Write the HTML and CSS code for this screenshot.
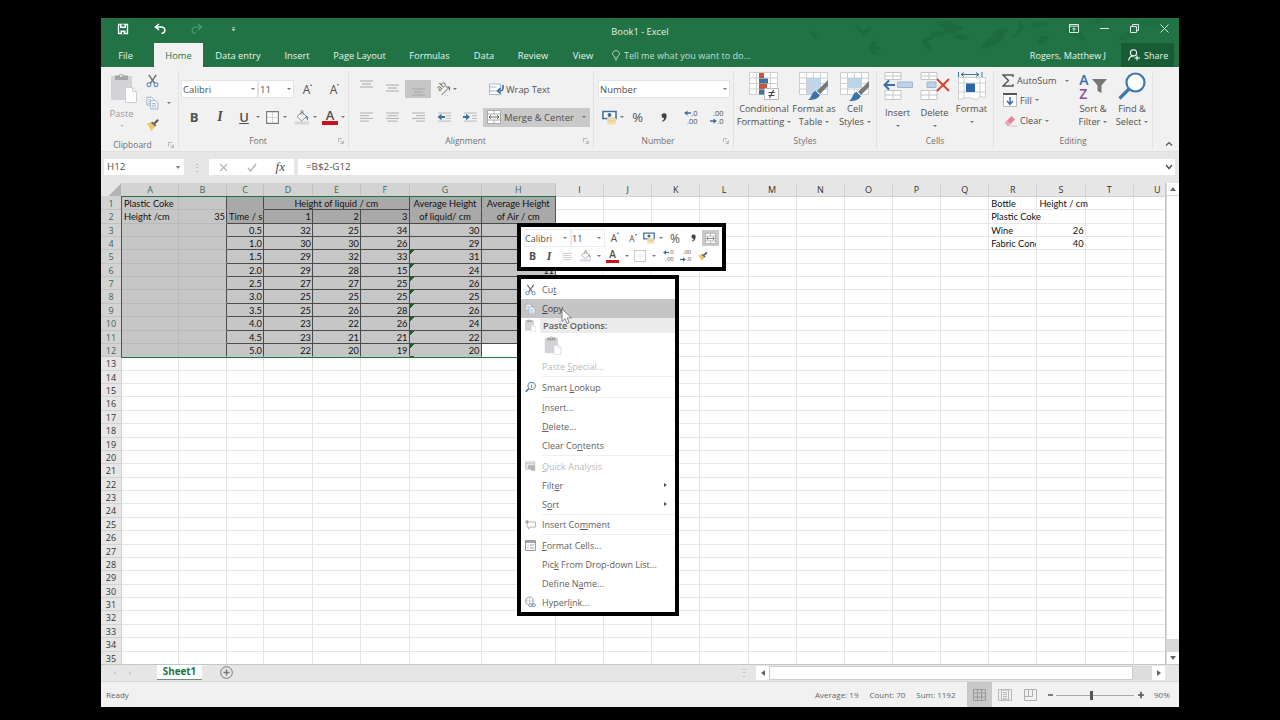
FILE: index.html
```html
<!DOCTYPE html>
<html lang="en">
<head>
    <meta charset="UTF-8">
    <title>Book1 - Excel</title>
    <link rel="stylesheet" href="styles.css">
</head>
<body>
    <!-- shared icons -->
    <svg class="sprite">
        <symbol id="i-cut" viewBox="0 0 14 14"><path d="M3 .5 9.3 9.5M11 .5 4.7 9.5" stroke="#666" stroke-width="1.4" fill="none"/><circle cx="3.2" cy="11" r="2.1" fill="none" stroke="#4f82b3" stroke-width="1.1"/><circle cx="10.8" cy="11" r="2.1" fill="none" stroke="#4f82b3" stroke-width="1.1"/></symbol>
        <symbol id="i-copy" viewBox="0 0 14 14"><path d="M1 .8h5l2.5 2.5v6H1z" fill="#fff" stroke="#9aabbb"/><path d="M5 4.5h5L12.8 7v6.3H5z" fill="#fff" stroke="#9aabbb"/><path d="M2.5 3.5h3M2.5 5.5h2M2.5 7.5h2M6.5 7.5h4M6.5 9.3h4.5M6.5 11.1h4.5" stroke="#7fa6cb" stroke-width=".8"/></symbol>
        <symbol id="i-brush" viewBox="0 0 14 14"><path d="M.5 6l5-1.5 4.5 4-2 2-2.500 3.500z" fill="#edc766"/><path d="M5.500 4.500l4.500 4" stroke="#666" stroke-width="2"/><path d="M8.500 5.800 12.500 2" stroke="#555" stroke-width="2.200"/></symbol>
        <symbol id="i-paste" viewBox="0 0 26 30"><path d="M0 3h21v24H0z" fill="#d3d2d6"/><path d="M4 2.500h3.500a3 3 0 0 1 5.500 0H17V7H4z" fill="#a5a5a5"/><circle cx="10.300" cy="2.800" r="1.200" fill="#eee"/><path d="M14.500 14.500h7l4 4V29.500h-11z" fill="#fff" stroke="#cfcfcf"/><path d="M21.500 14.500v4h4" fill="none" stroke="#cfcfcf"/></symbol>
        <symbol id="i-lines" viewBox="0 0 13 10"><path d="M0 1h13M1.500 3.700h10M0 6.400h13M1.500 9.100h10" stroke="#b0b0b0"/></symbol>
        <symbol id="i-left" viewBox="0 0 13 10"><path d="M0 1h13M0 3.700h9M0 6.400h13M0 9.100h9" stroke="#b0b0b0"/></symbol>
        <symbol id="i-right" viewBox="0 0 13 10"><path d="M0 1h13M4 3.700h9M0 6.400h13M4 9.100h9" stroke="#b0b0b0"/></symbol>
        <symbol id="i-three" viewBox="0 0 13 10"><path d="M0 1h13M2 4h9M0 7h13" stroke="#a8a8a8"/></symbol>
        <symbol id="i-border" viewBox="0 0 14 14"><path d="M.7.7h12.600v12.600H.7z" fill="#fff" stroke="#777" stroke-width="1.200"/><path d="M7 1v12M1 7h12" stroke="#aaa" stroke-dasharray="1 1"/></symbol>
        <symbol id="i-fill" viewBox="0 0 15 15"><path d="M0 11.500h14v3H0z" fill="#d4d7dc"/><path d="M2 6.500 7 2l4.500 4.500-5 4.300z" fill="#fff" stroke="#888"/><path d="M6 5V1.500a1 1 0 0 1 2 0V5" fill="none" stroke="#888"/><path d="M11 5.500c2 1 2.500 2.500 1.800 5-1-1.300-1.800-2.500-1.800-5z" fill="#4a78a8"/></symbol>
        <symbol id="i-money" viewBox="0 0 15 15"><path d="M1 1.500h13v7H1z" fill="#fff" stroke="#41719c" stroke-width="1.600"/><circle cx="7.500" cy="5" r="2" fill="#41719c"/><ellipse cx="9.500" cy="9" rx="4.500" ry="1.500" fill="#f4dfa6"/><ellipse cx="9.500" cy="11" rx="4.500" ry="1.500" fill="#edd28c"/><ellipse cx="9.500" cy="13" rx="4.500" ry="1.500" fill="#f1dda8"/></symbol>
        <symbol id="i-merge" viewBox="0 0 14 14"><path d="M.5.5h13v13H.5zM.5 4h13M.5 10h13M7 .5V4M7 10v3.500" fill="#fff" stroke="#aaa"/><path d="M2 7h10M4 5.200 2 7l2 1.800M10 5.200 12 7l-2 1.800" fill="none" stroke="#666"/></symbol>
        <symbol id="i-larrow" viewBox="0 0 8 6"><path d="M1 3h7" stroke="#3a6ea5" stroke-width="1.700"/><path d="M4 0 .3 3 4 6z" fill="#3a6ea5"/></symbol>
        <symbol id="i-rarrow" viewBox="0 0 8 6"><path d="M0 3h7" stroke="#3a6ea5" stroke-width="1.700"/><path d="M4 0l3.700 3L4 6z" fill="#3a6ea5"/></symbol>
        <symbol id="i-launch" viewBox="0 0 7 7"><path d="M.5 5V.5H5M3 3l3 3M6.300 3v3.300H3" fill="none" stroke="#999" stroke-width=".8"/></symbol>
        <symbol id="i-table" viewBox="0 0 30 28"><path d="M.5.5h28v22H.5zM.5 6h28M.5 11.500h28M.5 17h28M7.500.5v22M14.500.5v22M21.500.5v22" fill="#fff" stroke="#cecece"/></symbol>
        <symbol id="i-paint" viewBox="0 0 22 22"><path d="M21 1v6l-8 8-3-3z" fill="#777"/><path d="M9 12l4 4c-2 4-6 5-12 5 4-2 3-8 8-9z" fill="#3c72aa"/><path d="M9.500 12.500l3 3" stroke="#fff"/></symbol>
    </svg>

    <div class="window">
        <header class="titlebar">
            <svg class="leaves" viewBox="0 0 370 49" fill="#1b6439">
                <path d="M2 13c5 0 3 4 9 7-5 2-9-1-9-7zM45 6c6 1 7 4 9 8 2-3 4-4 9-3-4 2-5 4-6 6l-4 1c-1-5-5-6-8-12zM59 30c2-5 5-8 9-9-1 4-1 6-3 8 4-1 6 0 8 2-4 1-6 1-8 1l4 5c-5 0-9-3-10-7zM112 22c7-2 9-4 13-4-2 4-5 5-7 6 3 1 4 3 4 9-5-2-8-6-10-11z"/>
                <path d="M126 5c7-4 15-3 20 1-5 5-14 5-20-1zM134 13c5-7 13-8 21-4-5 6-14 9-21 4zM120 16c6-4 12-4 17 0-5 4-12 4-17 0zM144 19c5-4 12-3 17 0-5 4-12 4-17 0z"/>
                <path d="M172 31c4-10 11-14 24-15-3 8-9 13-24 15zM182 16c6-5 11-6 17-5-3 5-9 8-17 5zM201 21c8-8 11-12 8-18 9 4 9 11-8 18zM228 27c1-8 5-10 12-9-2 5-4 8-12 9z"/>
                <path d="M220 7c8-5 14-5 20-1-6 4-12 5-20 1zM256 10c12 0 18 4 22 13-10-1-17-4-22-13z" opacity=".8"/>
                <path d="M276 6c6-6 12-7 20-6-3 6-9 8-20 6zM308 22c5-8 13-10 22-9-5 7-12 11-22 9zM330 6c7-5 14-6 24-3-6 6-15 7-24 3z" opacity=".6"/>
            </svg>
            <div class="title-row">
                <div class="quick">
                    <svg width="12" height="12" viewBox="0 0 12 12"><path d="M1.500 1.500h9v9h-9z" fill="none" stroke="#fff" stroke-width="1.300"/><path d="M3 1h6v4H3zM3.500 7.500h5V11h-5z" fill="#fff"/><path d="M4.500 1.500h3v2h-3zM5 9h1.500v2H5z" fill="#217346"/></svg>
                    <svg width="12" height="12" viewBox="0 0 12 12"><path d="M5 1 1.500 4 5 7M2 4h5c5 0 5 6 .5 6.500" fill="none" stroke="#fff" stroke-width="1.600"/></svg>
                    <svg class="redo" width="12" height="12" viewBox="0 0 12 12"><path d="M7 1l3.500 3L7 7M10 4H5C0 4 0 10 4.500 10.500" fill="none" stroke="#4f9a70" stroke-width="1.200"/></svg>
                    <svg width="5" height="5" viewBox="0 0 6 6"><path d="M1 .8h4" stroke="#b9d5c5"/><path d="M.8 2.500h4.400L3 5z" fill="#cfe3d7"/></svg>
                </div>
                <div class="book">Book1 - Excel</div>
                <div class="winctl">
                    <svg width="10" height="9" viewBox="0 0 10 9"><path d="M.5.5h9v8h-9zM.5 2.200h9" fill="none" stroke="#dcebe2"/><path d="M5 7.500V4M3.300 5.500 5 3.800l1.700 1.700" fill="none" stroke="#dcebe2"/></svg>
                    <svg width="9" height="9" viewBox="0 0 9 9"><path d="M0 4.500h9" stroke="#dcebe2"/></svg>
                    <svg width="9" height="9" viewBox="0 0 9 9"><path d="M.5 2.500h6v6h-6zM2.500 2.500v-2h6v6h-2" fill="none" stroke="#dcebe2"/></svg>
                    <svg width="9" height="9" viewBox="0 0 9 9"><path d="M.5.5l8 8M8.500.5l-8 8" stroke="#dcebe2"/></svg>
                </div>
            </div>
            <nav class="tabs">
                <span class="tab file">File</span>
                <span class="tab active">Home</span>
                <span class="tab t-entry">Data entry</span>
                <span class="tab t-insert">Insert</span>
                <span class="tab t-layout">Page Layout</span>
                <span class="tab t-formulas">Formulas</span>
                <span class="tab t-data">Data</span>
                <span class="tab t-review">Review</span>
                <span class="tab t-view">View</span>
                <span class="tell"><svg width="8" height="11" viewBox="0 0 8 11"><path d="M2.700 8V7C-1.500 3.500 1.500.6 4 .6S9.500 3.500 5.300 7v1zM2.700 9.800h2.600" fill="none" stroke="#c5ddcf" stroke-width=".9"/></svg>Tell me what you want to do...</span>
                <span class="user">Rogers, Matthew J</span>
                <span class="share"><svg width="12" height="12" viewBox="0 0 12 12"><circle cx="5.500" cy="3.800" r="3.100" fill="none" stroke="#fff" stroke-width="1.100"/><path d="M.7 11.500C1 8.500 3 7 5.500 7M9 6.500v5M6.500 9H12" fill="none" stroke="#fff" stroke-width="1.100"/></svg>Share</span>
            </nav>
        </header>

        <section class="ribbon">
            <div class="group g-clipboard">
                <div class="body">
                    <div class="paste"><svg width="26" height="30"><use href="#i-paste"/></svg><span>Paste</span><i class="caret pale"></i></div>
                    <div class="clip-tools">
                        <svg width="13" height="14"><use href="#i-cut"/></svg>
                        <div><svg width="13" height="14"><use href="#i-copy"/></svg><i class="caret"></i></div>
                        <svg width="14" height="13"><use href="#i-brush"/></svg>
                    </div>
                </div>
                <div class="label">Clipboard<svg class="launch"><use href="#i-launch"/></svg></div>
            </div>

            <div class="group g-font">
                <div class="body rows">
                    <div class="row">
                        <span class="box fam">Calibri<i class="caret"></i></span><span class="box size">11<i class="caret"></i></span>
                        <span class="grow">A<i class="tick"></i></span><span class="grow">A<i class="tick down"></i></span>
                    </div>
                    <div class="row">
                        <b class="fmt">B</b><em class="fmt">I</em><u class="fmt und">U</u><i class="caret"></i>
                        <svg class="ic-border" width="13" height="13"><use href="#i-border"/></svg><i class="caret"></i>
                        <svg class="ic-fill" width="15" height="15"><use href="#i-fill"/></svg><i class="caret"></i>
                        <span class="fcolor">A</span><i class="caret"></i>
                    </div>
                </div>
                <div class="label">Font<svg class="launch"><use href="#i-launch"/></svg></div>
            </div>

            <div class="group g-align">
                <div class="body rows">
                    <div class="row">
                        <span class="al up"><svg width="13" height="10"><use href="#i-three"/></svg></span>
                        <span class="al"><svg width="13" height="10"><use href="#i-three"/></svg></span>
                        <span class="al on"><svg width="13" height="10"><use href="#i-three"/></svg></span>
                        <span class="al rot"><span class="slant"><span>ab</span><svg width="14" height="13" viewBox="0 0 14 13"><path d="M4.500 12 12.500 4M9 4h3.500v3.500" fill="none" stroke="#666"/></svg></span><i class="caret"></i></span>
                        <span class="wrap"><svg width="15" height="13" viewBox="0 0 15 13"><path d="M.5 1h11v10.500H.5zM.5 4h7M.5 8h7" fill="#fff" stroke="#a9b8c6"/><path d="M14 2v3c0 3-2 3-5 3M11.500 5 8.500 8l3 2.500" fill="none" stroke="#3a6ea5" stroke-width="1.600"/></svg>Wrap Text</span>
                    </div>
                    <div class="row">
                        <span class="al"><svg width="13" height="10"><use href="#i-left"/></svg></span>
                        <span class="al"><svg width="13" height="10"><use href="#i-lines"/></svg></span>
                        <span class="al"><svg width="13" height="10"><use href="#i-right"/></svg></span>
                        <span class="al"><svg width="14" height="10" viewBox="0 0 14 10"><path d="M1 1h13M9 3.700h5M9 6.400h5M1 9.100h13" stroke="#bbb"/><path d="M3 5h5" stroke="#3a6ea5" stroke-width="2"/><path d="M4.500 1.800.5 5l4 3.200z" fill="#3a6ea5"/></svg></span>
                        <span class="al"><svg width="14" height="10" viewBox="0 0 14 10"><path d="M1 1h13M9 3.700h5M9 6.400h5M1 9.100h13" stroke="#bbb"/><path d="M0 5h4" stroke="#3a6ea5" stroke-width="2"/><path d="M3 1.800 7 5 3 8.200z" fill="#3a6ea5"/></svg></span>
                        <span class="merge"><svg width="14" height="14"><use href="#i-merge"/></svg>Merge &amp; Center<i class="caret"></i></span>
                    </div>
                </div>
                <div class="label">Alignment<svg class="launch"><use href="#i-launch"/></svg></div>
            </div>

            <div class="group g-number">
                <div class="body rows">
                    <div class="row"><span class="box num">Number<i class="caret"></i></span></div>
                    <div class="row">
                        <svg class="money" width="15" height="15"><use href="#i-money"/></svg><i class="caret"></i>
                        <span class="pct">%</span>
                        <span class="comma"><svg width="6" height="9" viewBox="0 0 6 9"><path d="M3 .3a2.400 2.400 0 0 1 2.600 2.600C5.600 6 4 8 1.500 8.800L1 8c1.300-.7 2-1.600 2.100-2.700A2.500 2.500 0 1 1 3 .3z" fill="#444"/></svg></span>
                        <span class="dec"><span><svg width="7" height="6"><use href="#i-larrow"/></svg>.0</span><span>.00</span></span>
                        <span class="dec"><span>.00</span><span><svg width="7" height="6"><use href="#i-rarrow"/></svg>.0</span></span>
                    </div>
                </div>
                <div class="label">Number<svg class="launch"><use href="#i-launch"/></svg></div>
            </div>

            <div class="group g-styles">
                <div class="body">
                    <div class="big cond"><svg width="30" height="29" viewBox="0 0 30 29"><use href="#i-table" width="30" height="28"/><path d="M10 1h5v5h-5zM10 12h8v5h-8z" fill="#c8553d"/><path d="M10 6.500h9v5h-9zM10 17.500h5v5h-5z" fill="#41719c"/><path d="M15.500 16.500h14v11h-14z" fill="#fff" stroke="#bbb"/><path d="M19.500 20.500h6M19.500 23.500h6M24.500 18l-4 8" stroke="#444" stroke-width="1.100"/></svg>Conditional<span>Formatting<i class="caret"></i></span></div>
                    <div class="big tbl"><svg width="30" height="29" viewBox="0 0 30 29"><use href="#i-table" width="30" height="28"/><path d="M8 6h14v17H8z" fill="#bcd3e8" opacity=".9"/><use href="#i-paint" x="8" y="7" width="22" height="22"/></svg>Format as<span>Table<i class="caret"></i></span></div>
                    <div class="big sty"><svg width="30" height="29" viewBox="0 0 30 29"><use href="#i-table" width="30" height="28"/><path d="M7.500 6h14v10h-14z" fill="#bcd3e8"/><use href="#i-paint" x="8" y="8" width="22" height="22"/></svg>Cell<span>Styles<i class="caret"></i></span></div>
                </div>
                <div class="label">Styles</div>
            </div>

            <div class="group g-cells">
                <div class="body">
                    <div class="big low"><svg width="30" height="28" viewBox="0 0 30 28"><path d="M2 .5h16v7H2zM10 .5v7M2 18.500h16v9H2zM10 18.500v9M2 4h16M2 23h16" fill="#fff" stroke="#c4c4c4"/><path d="M14.500 10h15v5.500h-15z" fill="#bcd3e8" stroke="#9fb6cc"/><path d="M2 13h10M6 8.500 1.500 13 6 17.500" fill="none" stroke="#3a6ea5" stroke-width="2"/></svg>Insert<i class="caret"></i></div>
                    <div class="big low"><svg width="30" height="28" viewBox="0 0 30 28"><path d="M1 .5h16v7H1zM9 .5v7M1 18.500h16v9H1zM9 18.500v9M1 4h16M1 23h16" fill="#fff" stroke="#c4c4c4"/><path d="M7 10h9v5.500H7z" fill="#bcd3e8" stroke="#9fb6cc"/><path d="M17 7l12 12M29 7 17 19" stroke="#d0492c" stroke-width="2"/></svg>Delete<i class="caret"></i></div>
                    <div class="big"><svg width="30" height="29" viewBox="0 0 30 29"><path d="M1.500 5.500h27v20l-5-1-4 3-9-2-9 2zM1.500 11h27M1.500 20h27M7 5.500V27M23 5.500V25" fill="#fff" stroke="#cecece"/><path d="M9 11.500h9v8.500H9z" fill="#2e67a8"/><path d="M4 2.500h18M7 .5 4 2.500l3 2M19 .5l3 2-3 2M1.500 0v5M25 0v5" fill="none" stroke="#3a7c9c"/></svg>Format<i class="caret"></i></div>
                </div>
                <div class="label">Cells</div>
            </div>

            <div class="group g-edit">
                <div class="body">
                    <div class="edits">
                        <div class="sum"><svg width="13" height="13" viewBox="0 0 13 13"><path d="M11 3V1H1l5.500 5.500L1 12h10v-2" fill="none" stroke="#555" stroke-width="1.400"/></svg>AutoSum<i class="caret"></i></div>
                        <div><svg width="14" height="14" viewBox="0 0 14 14"><path d="M.5.5h13v13H.5z" fill="#fff" stroke="#bbb"/><path d="M0 1h14" stroke="#555" stroke-width="2"/><path d="M7 4v7M4 8l3 3.300L10 8" fill="none" stroke="#3a6ea5" stroke-width="1.500"/></svg>Fill<i class="caret"></i></div>
                        <div><svg width="14" height="12" viewBox="0 0 14 12"><path d="M2 7.500 8.500 1 12 4.500 6 10.500H4z" fill="#e8829a"/><path d="M2 7.500 4 5.500l3.500 3.500L6 10.500H4z" fill="#f0a9b8"/><path d="M6 11h8" stroke="#ccc"/></svg>Clear<i class="caret"></i></div>
                    </div>
                    <div class="big sort">
                        <div class="sorticon"><div><b class="az-a">A</b><b class="az-z">Z</b></div><svg width="15" height="15" viewBox="0 0 15 15"><path d="M0 0h15L9.500 6.500V14l-4-2V6.500z" fill="#777"/></svg></div>
                        Sort &amp;<span>Filter<i class="caret"></i></span>
                    </div>
                    <div class="big"><svg width="28" height="29" viewBox="0 0 28 29"><circle cx="17.500" cy="10.500" r="9" fill="#fff" stroke="#3f78ae" stroke-width="2.200"/><path d="M11 17 1.500 26.500" stroke="#3f78ae" stroke-width="3.200"/></svg>Find &amp;<span>Select<i class="caret"></i></span></div>
                </div>
                <div class="label">Editing</div>
            </div>
            <svg class="collapse" width="8" height="5" viewBox="0 0 8 5"><path d="M1 4.500l3-3 3 3" fill="none" stroke="#555" stroke-width="1.200"/></svg>
        </section>

        <section class="formula">
            <div class="name">H12<i class="caret big-caret"></i></div>
            <div class="dots">&#8942;</div>
            <div class="fx">
                <svg width="9" height="9" viewBox="0 0 9 9"><path d="M1 1l7 7M8 1 1 8" stroke="#b5b5b5" stroke-width="1.200"/></svg>
                <svg width="10" height="9" viewBox="0 0 10 9"><path d="M1 5l2.500 3L9 1" fill="none" stroke="#b5b5b5" stroke-width="1.500"/></svg>
                <span>fx</span>
            </div>
            <div class="input">=B$2-G12<svg width="8" height="6" viewBox="0 0 8 6"><path d="M1 1l3 3.500L7 1" fill="none" stroke="#555" stroke-width="1.500"/></svg></div>
        </section>

        <main class="sheet">
            <div class="grid" id="grid"></div>
            <div class="vscroll"><span class="arrow up"></span><div class="track"></div><span class="arrow down"></span></div>
            <div class="selection"></div>

            <div class="mini">
                <div class="mrow">
                    <span class="mbox mfam">Calibri<i class="caret"></i></span><span class="mbox msize">11<i class="caret"></i></span>
                    <span class="mgrow">A<i class="tick"></i></span><span class="mgrow sm">A<i class="tick down"></i></span>
                    <svg class="mmoney" width="12" height="12"><use href="#i-money"/></svg><i class="caret"></i>
                    <span class="mpct">%</span>
                    <span class="mcomma"><svg width="5" height="8" viewBox="0 0 6 9"><path d="M3 .3a2.400 2.400 0 0 1 2.600 2.600C5.600 6 4 8 1.500 8.800L1 8c1.300-.7 2-1.600 2.100-2.700A2.500 2.500 0 1 1 3 .3z" fill="#444"/></svg></span>
                    <span class="mmerge"><svg width="11" height="11"><use href="#i-merge"/></svg></span>
                </div>
                <div class="mrow second">
                    <b>B</b><em>I</em>
                    <svg class="mlines" width="10" height="9"><use href="#i-lines"/></svg>
                    <svg class="mfill" width="12" height="12"><use href="#i-fill"/></svg><i class="caret"></i>
                    <span class="fcolor">A</span><i class="caret"></i>
                    <svg class="mborder" width="12" height="12"><use href="#i-border"/></svg><i class="caret"></i>
                    <span class="dec first"><span><svg width="6" height="5"><use href="#i-larrow"/></svg>.0</span><span>.00</span></span>
                    <span class="dec"><span>.00</span><span><svg width="6" height="5"><use href="#i-rarrow"/></svg>.0</span></span>
                    <svg class="mbrush" width="10" height="10"><use href="#i-brush"/></svg>
                </div>
            </div>

            <div class="menu">
                <div class="item"><svg width="11" height="12"><use href="#i-cut"/></svg>Cu<u>t</u></div>
                <div class="item hover"><svg width="11" height="12"><use href="#i-copy"/></svg><u>C</u>opy</div>
                <div class="item heading"><svg width="11" height="13"><use href="#i-paste"/></svg><span>Paste Options:</span></div>
                <div class="item pasteicon"><svg width="18" height="19"><use href="#i-paste"/></svg></div>
                <div class="item off">Paste <u>S</u>pecial...</div>
                <hr>
                <div class="item"><svg width="12" height="12" viewBox="0 0 12 12"><circle cx="7.200" cy="4.800" r="4" fill="#fff" stroke="#55809f" stroke-width="1.100"/><path d="M4.300 7.700.8 11.200" stroke="#3f6e92" stroke-width="1.600"/><path d="M7.200 4.300V7M7.200 2.300v1" stroke="#3f6e92"/></svg>Smart <u>L</u>ookup</div>
                <hr>
                <div class="item"><u>I</u>nsert...</div>
                <div class="item"><u>D</u>elete...</div>
                <div class="item">Clear Co<u>n</u>tents</div>
                <hr>
                <div class="item off"><svg width="12" height="11" viewBox="0 0 12 11"><path d="M.5.500h10v8H.5zM.5 2.500h10" fill="#eee" stroke="#c4c4c4"/><path d="M3 4h8v6H7l-1-2H3z" fill="#b4b4b4"/></svg><u>Q</u>uick Analysis</div>
                <div class="item">Filt<u>e</u>r<b class="sub"></b></div>
                <div class="item">S<u>o</u>rt<b class="sub"></b></div>
                <hr>
                <div class="item"><svg class="comment" width="13" height="12" viewBox="0 0 13 12"><path d="M5 2.500h7.500v6H6l-2 2.500V8.500H2.500V5" fill="none" stroke="#aaa"/><path d="M2.500 0v5M0 2.500h5" stroke="#777"/></svg>Insert Co<u>m</u>ment</div>
                <hr>
                <div class="item"><svg width="11" height="11" viewBox="0 0 11 11"><path d="M.5.5h10v10H.5z" fill="#fff" stroke="#999"/><path d="M.5 2h10" stroke="#888" stroke-width="1.500"/><path d="M2.500 5h1M5 5h4M2.500 8h1M5 8h4" stroke="#999"/></svg><u>F</u>ormat Cells...</div>
                <div class="item">Pic<u>k</u> From Drop-down List...</div>
                <div class="item">Define N<u>a</u>me...</div>
                <div class="item"><svg width="12" height="12" viewBox="0 0 12 12"><circle cx="5" cy="5" r="4.500" fill="#fff" stroke="#aaa"/><path d="M.5 5h9M5 .5v9M2.500 1.500c-1 3-1 5 0 7M7.500 1.500c1 3 1 5 0 7" fill="none" stroke="#bbb" stroke-width=".8"/><rect x="4" y="8" width="4.500" height="3" rx="1.500" fill="#fff" stroke="#6b8cad"/><rect x="7.500" y="8" width="4" height="3" rx="1.500" fill="none" stroke="#6b8cad"/></svg>Hyperl<u>i</u>nk...</div>
            </div>

            <svg class="pointer" width="12" height="17" viewBox="0 0 12 17"><path d="M1 1v12.500l3-2.800 2 4.800 2.200-.9-2-4.700h4.300z" fill="#fff" stroke="#666" stroke-width=".8"/></svg>
        </main>

        <div class="sheettabs">
            <span class="nav"><i></i><i></i></span>
            <span class="sheettab">Sheet1</span>
            <svg class="plus" width="13" height="13" viewBox="0 0 13 13"><circle cx="6.500" cy="6.500" r="5.800" fill="none" stroke="#777"/><path d="M6.500 3.500v6M3.500 6.500h6" stroke="#777" stroke-width="1.400"/></svg>
            <span class="grip">&#8942;</span>
            <div class="hscroll"><span class="arrow left"></span><div class="thumb"></div><span class="arrow right"></span></div>
        </div>

        <footer class="status">
            <span class="ready">Ready</span>
            <span class="stat">Average: 19</span><span class="stat">Count: 70</span><span class="stat">Sum: 1192</span>
            <span class="view on"><svg width="13" height="12" viewBox="0 0 13 12"><path d="M.5.5h12v11H.5zM.5 4h12M.5 8h12M4.500.5v11M8.500.5v11" fill="none" stroke="#999"/></svg></span>
            <span class="view"><svg width="14" height="12" viewBox="0 0 14 12"><path d="M.5.5h13v11H.5zM3.500 1h7v10h-7zM5 3.500h4M5 5.500h4M5 7.500h4M5 9.500h4" fill="none" stroke="#b8b8b8"/></svg></span>
            <span class="view"><svg width="13" height="12" viewBox="0 0 13 12"><path d="M.5.5h12v11H.5zM4.500.5v7M8.500.5v7M.5 7.500h8" fill="none" stroke="#b0b0b0"/></svg></span>
            <svg class="zoom" width="96" height="12" viewBox="0 0 96 12"><path d="M0 6h5M90 6h6.500M93 2.800v6.500" stroke="#555" stroke-width="1.600"/><path d="M8 6.500h78" stroke="#aaa"/><path d="M43.500 2v9" stroke="#555" stroke-width="3"/></svg>
            <span class="percent">90%</span>
        </footer>
    </div>

    <script src="script.js"></script>
</body>
</html>
```
FILE: styles.css
```css
* {
    box-sizing: border-box;
}

body {
    margin: 0;
    padding: 18px 101px 0;
    height: 720px;
    overflow: hidden;
    background: #000;
    font-family: "Open Sans", "Noto Sans", sans-serif;
    font-size: 9.5px;
    color: #505050;
}

svg {
    flex: none;
    display: block;
}

.sprite {
    position: absolute;
    width: 0;
    height: 0;
}

.window {
    width: 1078px;
    height: 689px;
    display: flex;
    flex-direction: column;
    background: #e6e6e6;
}

.caret {
    flex: none;
    width: 0;
    height: 0;
    border: 2px solid transparent;
    border-top: 2px solid #777;
    border-bottom: 0;
}

.caret.pale {
    border-top-color: #c4c4c4;
}

/* title bar */
.titlebar {
    position: relative;
    height: 49px;
    background: #217346;
    color: #fff;
}

.leaves {
    position: absolute;
    right: 0;
    top: 0;
    width: 370px;
    height: 49px;
    opacity: .55;
}

.title-row {
    position: relative;
    display: flex;
    align-items: center;
    height: 25px;
}

.quick {
    width: 300px;
    display: flex;
    align-items: center;
    padding: 0 0 3px 16px;
    gap: 25px;
}

.quick .redo {
    margin-right: 3px;
}

.book {
    flex: 1;
    text-align: center;
    padding-top: 1px;
    font-size: 9.3px;
    color: #e2efe8;
}

.winctl {
    width: 300px;
    display: flex;
    justify-content: flex-end;
    align-items: center;
    gap: 21px;
    padding: 0 10px 4px 0;
}

.tabs {
    position: relative;
    display: flex;
    height: 24px;
    line-height: 25px;
    font-size: 9.3px;
    color: #e8f3ec;
}

.tab {
    text-align: center;
    white-space: nowrap;
}

.tab.file { width: 49px; }
.tab.active {
    width: 49px;
    margin-left: 4px;
    background: #f1f1f1;
    color: #217346;
}
.t-entry { width: 70px; }
.t-insert { width: 48px; }
.t-layout { width: 77px; }
.t-formulas { width: 63px; }
.t-data { width: 46px; }
.t-review { width: 52px; }
.t-view { width: 48px; }

.tell {
    display: flex;
    align-items: center;
    gap: 4px;
    margin-left: 5px;
    font-size: 9.1px;
    color: #c5ddcf;
}

.user {
    margin-left: auto;
    margin-right: 15px;
    font-size: 9.1px;
}

.share {
    display: flex;
    align-items: center;
    gap: 4px;
    width: 53px;
    padding-left: 7px;
    margin-right: 5px;
    background: #185c36;
    font-size: 9px;
}

/* ribbon */
.ribbon {
    display: flex;
    height: 85px;
    background: #f1f1f1;
    border-bottom: 1px solid #e0e0e0;
}

.group {
    display: flex;
    flex-direction: column;
    margin: 4px 0 2px;
    border-right: 1px solid #e2e2e2;
}

.g-clipboard { width: 78px; }
.g-font { width: 170px; }
.g-align { width: 245px; }
.g-number { width: 140px; }
.g-styles { width: 143px; }
.g-cells { width: 117px; }
.g-edit { width: 159px; }

.body {
    flex: 1;
    display: flex;
}

.label {
    position: relative;
    height: 14px;
    line-height: 12px;
    text-align: center;
    font-size: 8.5px;
    color: #707070;
}

.g-clipboard .label {
    padding-right: 14px;
}

.g-font .label,
.g-align .label,
.g-number .label {
    padding-right: 11px;
}

.launch {
    position: absolute;
    right: 4px;
    top: 3px;
    width: 6px;
    height: 6px;
}

.paste {
    width: 41px;
    display: flex;
    flex-direction: column;
    align-items: center;
    color: #9a9a9a;
    padding-top: 2px;
}

.paste svg { margin-left: 4px; }
.paste span { margin-top: 4px; line-height: 14px; }
.paste .caret { margin-top: 4px; }

.clip-tools {
    padding: 3px 0 0 4px;
}

.clip-tools svg { margin-bottom: 8px; }

.clip-tools div {
    display: flex;
    gap: 8px;
}

.clip-tools .caret { margin-top: 6px; }

.rows {
    flex-direction: column;
    padding: 8px 0 0 2px;
    gap: 8px;
}

.row {
    display: flex;
    align-items: center;
    height: 20px;
}

.box {
    display: flex;
    align-items: center;
    justify-content: space-between;
    height: 18px;
    padding: 0 2px 0 1px;
    background: #fff;
    border: 1px solid #e4e4e4;
}

.fam { width: 77px; }
.size { width: 36px; }
.num { width: 132px; margin-left: 2px; }

.grow {
    display: flex;
    justify-content: center;
    width: 27px;
    font-size: 12px;
}

.tick {
    width: 0;
    height: 0;
    margin-top: 3px;
    border: 1.5px solid transparent;
    border-bottom: 2px solid #3a6ea5;
    border-top: 0;
}

.tick.down { transform: scaleY(-1); }

.fmt {
    width: 26px;
    text-align: center;
    font-size: 13px;
}

em.fmt {
    font-family: "Liberation Serif", serif;
    font-weight: bold;
    font-size: 14px;
}

.fmt.und {
    width: 22px;
    font-weight: 600;
    margin-right: 1px;
}

.ic-border { margin: 0 4px 0 6px; }
.ic-fill { margin: 0 3px 0 8px; }

.fcolor {
    width: 16px;
    height: 16px;
    margin: 0 3px 0 5px;
    border-bottom: 4px solid #c8101e;
    line-height: 13px;
    font-size: 13px;
    font-weight: 600;
    text-align: center;
}

.al {
    width: 26px;
    height: 18px;
    display: flex;
    align-items: center;
    justify-content: center;
}

.g-align .rows { padding-left: 4px; }
.al.up { padding-bottom: 8px; }
.al.on { background: #c6c6c6; align-items: flex-end; }
.al.rot { width: 32px; gap: 2px; }

.slant {
    position: relative;
}

.slant > span {
    position: absolute;
    left: -1px;
    top: -2px;
    font-size: 8.5px;
    line-height: 10px;
    transform: rotate(-45deg);
}

.wrap {
    display: flex;
    align-items: center;
    gap: 2px;
    margin-left: 26px;
    font-size: 9.3px;
}

.merge {
    display: flex;
    align-items: center;
    gap: 3px;
    height: 19px;
    width: 107px;
    padding: 0 4px;
    background: #c9c9c9;
    white-space: nowrap;
}

.merge .caret { margin-left: auto; }

.money { margin: 0 3px 0 6px; }

.pct {
    width: 27px;
    text-align: center;
    font-size: 13px;
}

.comma {
    width: 26px;
    display: flex;
    justify-content: center;
}

.dec {
    width: 26px;
    display: flex;
    flex-direction: column;
    align-items: center;
    font-size: 7.5px;
    line-height: 8px;
}

.dec > span {
    display: flex;
    align-items: center;
    width: 15px;
    justify-content: flex-end;
}

.big {
    display: flex;
    flex-direction: column;
    align-items: center;
    width: 38px;
    padding-top: 1px;
    font-size: 9.3px;
    line-height: 12.5px;
    white-space: nowrap;
}

.big > svg { margin-bottom: 2px; }

.big span {
    display: flex;
    align-items: center;
    gap: 3px;
}

.big > .caret { margin-top: 5px; }
.big.cond { width: 60px; }
.big.tbl { width: 40px; }
.big.sty { width: 42px; }
.big.low > svg { margin-bottom: 7px; }
.big.sort { width: 40px; margin-left: 7px; }

.g-cells .body { padding-left: 2px; }
.g-cells .big { width: 37px; }

.sorticon {
    display: flex;
    align-items: center;
    gap: 3px;
    height: 29px;
    margin-bottom: 2px;
}

.az-a,
.az-z {
    display: block;
    font-size: 14px;
    font-weight: 600;
    line-height: 14px;
    color: #3a6ea5;
}

.az-z { color: #8b4aa5; }

.edits {
    width: 72px;
    padding: 0 0 0 8px;
}

.edits div {
    display: flex;
    align-items: center;
    gap: 3px;
    height: 20.5px;
    font-size: 9.2px;
}

.edits div + div { padding-left: 1px; }
.edits .sum { height: 19px; gap: 2px; }
.edits .sum .caret { margin-left: 7px; }

.collapse {
    margin: 74px 0 0 12px;
}

/* formula bar */
.formula {
    display: flex;
    align-items: center;
    height: 16px;
    margin: 7px 4px 8px 3px;
    font-size: 10px;
    line-height: 16px;
}

.formula > div {
    height: 16px;
}

.name,
.fx,
.input {
    background: #fff;
    display: flex;
    align-items: center;
    justify-content: space-between;
}

.name { width: 80px; padding: 0 4px 0 3px; font-size: 9.7px; }
.big-caret { border-width: 2.5px; border-top: 3px solid #777; border-bottom: 0; }
.dots { width: 25px; text-align: center; color: #999; }

.fx {
    width: 85px;
    padding: 0 9px 0 10px;
}

.fx span { font: italic 13px "Liberation Serif", serif; }

.input {
    flex: 1;
    margin-left: 4px;
    padding: 0 2px 0 8px;
    font-size: 9.8px;
}

/* worksheet */
.sheet {
    position: relative;
    display: flex;
    height: 481px;
    overflow: hidden;
}

.grid {
    width: 1065px;
    height: 481px;
    overflow: hidden;
    display: grid;
    grid-template-columns: 21px 57px 48px 37px 49px 48px 48.500px 72px 74.500px repeat(13, 48.150px);
    grid-template-rows: 13.800px repeat(35, 13.385px);
    background: #fff;
    font-family: Lato, "Open Sans", sans-serif;
    font-size: 9.3px;
    line-height: 13px;
    color: #111;
    border-right: 1px solid #c6c6c6;
}

.grid > div {
    border-right: 1px solid #e6e6e6;
    border-bottom: 1px solid #e6e6e6;
    padding: 0 1px 0 2px;
    white-space: nowrap;
    min-width: 0;
}

.grid .head {
    background: #e6e6e6;
    border-color: #d2d2d2;
    text-align: center;
    font-family: "Open Sans", sans-serif;
    font-size: 9px;
    color: #333;
    padding: 0;
}

.grid .head.in {
    background: #d3d3d3;
    border-color: #c2c2c2;
    color: #3c6b50;
}

.grid .corner {
    background: linear-gradient(135deg, #e6e6e6 62%, #b4b4b4 62%);
}

.grid .sel {
    background: #c6c6c6;
    border-color: #b9b9b9;
}

.grid .tbl-cell { border-color: #4a4a4a; }
.grid .shade { background: #a9a9a9; }
.grid .edge { border-right-color: #4a4a4a; }
.grid .open { border-bottom-color: transparent; }
.grid .last { border-bottom-color: transparent; }
.grid .cur { background: #fff; }
.grid .num-cell { text-align: right; }
.grid .mid { text-align: center; padding: 0; }
.grid .clip { overflow: hidden; }

.grid .flag {
    background-image: linear-gradient(135deg, #1b5e2e 3px, transparent 3.500px);
}

.selection {
    position: absolute;
    left: 20px;
    top: 13px;
    width: 435px;
    height: 162px;
    border: 1px solid #217346;
}

.arrow {
    width: 13px;
    background: #fff;
    display: flex;
    align-items: center;
    justify-content: center;
}

.arrow::before {
    content: "";
    border: 3px solid transparent;
    border-right: 4px solid #666;
    border-left: 0;
}

.arrow.right::before { transform: scaleX(-1); }
.arrow.up::before { transform: rotate(90deg); }
.arrow.down::before { transform: rotate(-90deg); }

.vscroll {
    width: 13px;
    padding: 0 0 0 1px;
    display: flex;
    flex-direction: column;
    background: #d9d9d9;
}

.vscroll .arrow {
    width: 12px;
    height: 12px;
}

.vscroll .track {
    height: 443px;
    margin: 1px 0 auto;
    background: #fff;
}

/* mini toolbar */
.mini {
    position: absolute;
    left: 416px;
    top: 40px;
    width: 209px;
    height: 48px;
    border: 4px solid #000;
    background: #fff;
    padding: 2px 3px 0;
}

.mrow {
    display: flex;
    align-items: center;
    height: 18px;
    font-size: 9.1px;
}

.mbox {
    display: flex;
    align-items: center;
    justify-content: space-between;
    height: 18px;
    border: 1px solid #ececec;
    padding: 0 3px 0 0;
}

.mfam { width: 47px; }
.msize { width: 34px; }
.mgrow { display: flex; justify-content: center; width: 20px; font-size: 10px; }
.mgrow.sm { width: 16px; font-size: 8.5px; }
.mgrow .tick { margin-top: 1px; }
.mmoney { margin: 0 4px 0 2px; }
.mpct { width: 24px; text-align: center; font-size: 12px; }
.mcomma { width: 12px; display: flex; justify-content: center; }

.mmerge {
    display: flex;
    align-items: center;
    justify-content: center;
    width: 17px;
    height: 16px;
    margin-left: 3px;
    background: #c9c9c9;
}

.mrow.second b { width: 17px; text-align: center; font-size: 10.5px; }
.mrow.second em { width: 16px; text-align: center; font: italic bold 12px "Liberation Serif", serif; }
.mlines { margin: 0 8px 0 5px; }
.mfill { margin-right: 5px; }
.mfill, .mlines { opacity: .8; }
.mini .fcolor { width: 13px; height: 14px; margin: 0 6px 0 5px; font-size: 10px; line-height: 11px; border-bottom-width: 3px; }
.mborder { margin: 0 6px 0 5px; opacity: .4; }
.mini .dec { width: 17.5px; font-size: 6px; line-height: 7px; }
.mini .dec.first { margin-left: 3px; }
.mini .dec > span { width: 12px; }
.mbrush { margin-left: 4px; }

/* context menu */
.menu {
    position: absolute;
    left: 416px;
    top: 92px;
    width: 162px;
    height: 341px;
    border: 4px solid #000;
    background: #fff;
    padding-top: 1px;
    font-size: 9px;
    color: #606060;
}

.item {
    position: relative;
    display: flex;
    align-items: center;
    height: 19px;
    padding-left: 21px;
    white-space: pre;
}

.item > svg {
    margin-left: -17px;
    margin-right: 6px;
    width: 11px;
}

.item u { text-underline-offset: 1px; }
.item.hover { background: #c5c5c5; color: #444; }
.item.off { color: #bbb; }

.item.heading {
    height: 15px;
    font-weight: 600;
    font-size: 9.2px;
}

.item.heading span {
    flex: 1;
    margin-left: -2px;
    padding-left: 3px;
    background: #ececec;
    line-height: 15px;
}

.item.pasteicon { height: 24px; }
.item.pasteicon svg { width: 18px; margin-left: 2px; }

.menu hr {
    height: 1px;
    margin: 0 1px .5px 21px;
    border: 0;
    background: #efefef;
}

.sub {
    margin-left: auto;
    margin-right: 8px;
    border: 2.5px solid transparent;
    border-left: 3px solid #555;
    border-right: 0;
}

.pointer {
    position: absolute;
    left: 460px;
    top: 125px;
}

/* bottom bars */
.sheettabs {
    display: flex;
    height: 18px;
    border-top: 1px solid #c6c6c6;
    border-bottom: 1px solid #d6d6d6;
    background: #e6e6e6;
}

.nav {
    width: 56px;
    display: flex;
    align-items: center;
    gap: 13px;
    padding-left: 12px;
}

.nav i {
    border: 2.5px solid transparent;
    border-right: 3px solid #cecece;
    border-left: 0;
}

.nav i + i { transform: scaleX(-1); }

.sheettab {
    width: 45px;
    height: 15px;
    background: #fff;
    border-bottom: 1px solid #6b8f7b;
    color: #217346;
    font-weight: 700;
    font-size: 9.8px;
    line-height: 14px;
    text-align: center;
}

.plus { margin: 1px 0 0 18px; }
.grip { margin-left: auto; margin-right: 7px; color: #aaa; line-height: 15px; }

.hscroll {
    display: flex;
    width: 409px;
    height: 14px;
    margin: 1px 14px 0 0;
    background: #dcdcdc;
}

.thumb {
    width: 364px;
    margin-right: auto;
    background: #fff;
    border: 1px solid #cdcdcd;
}

.status {
    display: flex;
    align-items: center;
    height: 25px;
    background: #f1f1f1;
    font-size: 8px;
    color: #666;
}

.ready {
    margin-left: 5px;
    margin-right: auto;
}

.stat { margin-right: 11px; white-space: nowrap; }

.view {
    width: 25.5px;
    height: 25px;
    display: flex;
    align-items: center;
    justify-content: center;
}

.view.on { background: #c9c9c9; }
.zoom { margin-left: 5px; }
.percent { width: 35px; padding-left: 10px; }
```
FILE: script.js
```javascript
const cols = "ABCDEFGHIJKLMNOPQRSTU".split("");
const cells = {
    A1: "Plastic Coke", A2: "Height /cm", B2: 35,
    C2: "Time / s", D1: "Height of liquid / cm", D2: 1, E2: 2, F2: 3,
    G1: "Average Height", G2: "of liquid/ cm", H1: "Average Height", H2: "of Air / cm",
    H6: 11,
    R1: "Bottle", S1: "Height / cm", R2: "Plastic Coke",
    R3: "Wine", S3: 26, R4: "Fabric Cond", S4: 40
};

// time, three readings, average
const readings = [
    ["0.5", 32, 25, 34, 30],
    ["1.0", 30, 30, 26, 29],
    ["1.5", 29, 32, 33, 31],
    ["2.0", 29, 28, 15, 24],
    ["2.5", 27, 27, 25, 26],
    ["3.0", 25, 25, 25, 25],
    ["3.5", 25, 26, 28, 26],
    ["4.0", 23, 22, 26, 24],
    ["4.5", 23, 21, 21, 22],
    ["5.0", 22, 20, 19, 20]
];

readings.forEach((row, i) => {
    row.forEach((value, j) => cells["CDEFG"[j] + (i + 3)] = value);
});

const grid = document.getElementById("grid");

function add(text, className, span) {
    const div = document.createElement("div");
    div.textContent = text;
    div.className = className;
    if (span) div.style.gridColumn = "span " + span;
    grid.appendChild(div);
}

add("", "head corner");
cols.forEach((c, i) => add(c, "head" + (i < 8 ? " in" : "")));

for (let r = 1; r <= 35; r++) {
    add(r, "head" + (r <= 12 ? " in" : ""));
    cols.forEach((c, i) => {
        const id = c + r;
        if (id === "E1" || id === "F1") return;
        const value = id in cells ? cells[id] : "";
        const names = [];
        if (r <= 12 && i < 8) {
            names.push("sel");
            if (i >= 2) names.push("tbl-cell");
            if (c === "B") names.push("edge");
            if (i >= 2 && r <= 2) names.push("shade");
            if (r === 1 && (c === "G" || c === "H" || c === "C")) names.push("open");
            if (c === "G" && r >= 5) names.push("flag");
            if (r === 12) names.push("last");
        }
        if (id === "H12") names.push("cur");
        if (id === "R4") names.push("clip");
        if (id === "D1" || ((c === "G" || c === "H") && r <= 2)) names.push("mid");
        else if (value !== "" && !isNaN(value)) names.push("num-cell");
        add(value, names.join(" "), id === "D1" ? 3 : 0);
    });
}
```
